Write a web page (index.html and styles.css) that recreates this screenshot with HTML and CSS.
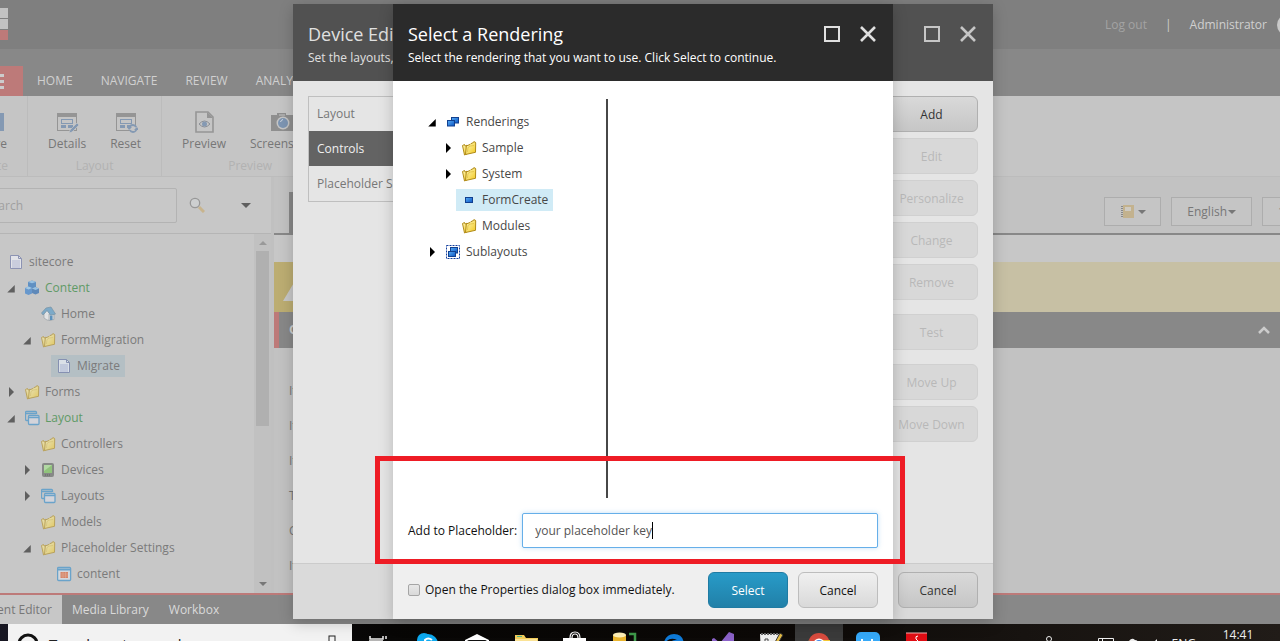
FILE: index.html
```html
<!DOCTYPE html>
<html lang="en">
  <head>
    <meta charset="UTF-8" />
    <meta name="viewport" content="width=device-width, initial-scale=1.0" />
    <title>Content Editor</title>
    <link rel="stylesheet" href="styles.css">
  </head>
  <body>
    <!-- icon set -->
    <svg class="sprite" aria-hidden="true">
      <defs>
        <linearGradient id="gold" x1="0" y1="0" x2="1" y2="1">
          <stop offset="0" stop-color="#fffbc4" />
          <stop offset="1" stop-color="#f2c71c" />
        </linearGradient>
        <linearGradient id="sky" x1="0" y1="0" x2="1" y2="1">
          <stop offset="0" stop-color="#5aaef5" />
          <stop offset="1" stop-color="#0a55c4" />
        </linearGradient>
      </defs>
      <symbol id="i-folder" viewBox="0 0 16 16">
        <path d="M.5 5.500l2-1 .6 1.500 2-.8v8.600l-2.600 1.200z" fill="url(#gold)" stroke="#b08a17" />
        <path d="M3.500 14.500l.8-8.500L8 4.500l1-1 1.500-.3.500-1 2-.4.700 1-.2 9.500z" fill="url(#gold)" stroke="#b08a17" />
        <path d="M5.500 12l.5-4.500 2.500-1.500 3.500-.5" fill="none" stroke="#e6c84e" />
      </symbol>
      <symbol id="i-doc" viewBox="0 0 16 16">
        <path d="M1.500 1.500h8l3 3v10h-11z" fill="#f4f6ff" stroke="#6672a6" />
        <path d="M9.500 1.500v3h3" fill="none" stroke="#6672a6" />
        <path d="M3 7h8M3 9h8M3 11h8M3 13h8" stroke="#a3adda" />
      </symbol>
      <symbol id="i-cubes" viewBox="0 0 16 16">
        <path d="M3 2l4-1.500L11 2v5l-4 1.500L3 7z" fill="#1d6cc0" />
        <path d="M3 2l4 1.300L11 2 7 .5z" fill="#7cc0f5" />
        <path d="M0 8l3.500-1.500L7 8v5.500L3.500 15 0 13.500z" fill="#2a7ad0" />
        <path d="M0 8l3.500 1.400L7 8 3.500 6.500z" fill="#8dcbf8" />
        <path d="M7 8.500L10.500 7 14 8.500V13l-3.500 1.500L7 13z" fill="#1b60b0" />
        <path d="M7 8.500l3.500 1.400L14 8.500 10.500 7z" fill="#7cc0f5" />
      </symbol>
      <symbol id="i-home" viewBox="0 0 16 16">
        <path d="M3 8l3-4 4 5v5.500l-4-.5-3-2z" fill="#f4f6f8" stroke="#7e8a94" stroke-width=".7" />
        <path d="M8 8h5v5.500l-5 1z" fill="#dce4ea" stroke="#7e8a94" stroke-width=".7" />
        <path d="M9 9.500h2.500v4.500H9z" fill="#1770b8" />
        <path d="M.5 7L5 2l5-1 4.500 7-1.500.5L9.500 9 6 4.500 2 9z" fill="#4d97c9" stroke="#45718f" stroke-width=".7" />
      </symbol>
      <symbol id="i-windows" viewBox="0 0 16 16">
        <path d="M11.500 4V2.500q0-1-1-1h-9q-1 0-1 1v7q0 1 1 1H3" fill="none" stroke="#2e8ccc" stroke-width="1.300" />
        <path d="M1 3.500h10" stroke="#2e8ccc" stroke-width="1.500" />
        <rect x="3.500" y="5.500" width="10.500" height="9" rx="1" fill="#dcdde8" stroke="#2e8ccc" stroke-width="1.300" />
        <path d="M4 7.500h10" stroke="#2e8ccc" stroke-width="1.500" />
      </symbol>
      <symbol id="i-device" viewBox="0 0 16 16">
        <rect x="1" y="1" width="12" height="14" rx="2" fill="#5b5f5b" />
        <rect x="3" y="3" width="8" height="8" fill="#6cc24a" />
        <path d="M3 3h8l-8 6z" fill="#a5e58c" />
        <path d="M4 13h6" stroke="#222" stroke-dasharray="1 1" />
      </symbol>
      <symbol id="i-slot" viewBox="0 0 16 16">
        <rect x=".6" y="1.500" width="13" height="13" rx="1" fill="#dfe4ea" stroke="#2e8ccc" stroke-width="1.300" />
        <path d="M1 3.500h12" stroke="#2e8ccc" stroke-width="2" />
        <rect x="3.500" y="6" width="7.500" height="6" fill="#e0592a" />
        <path d="M6 6v6M8.500 6v6M3.500 8H11M3.500 10H11" stroke="#f1a583" stroke-width=".5" />
      </symbol>
      <symbol id="i-renderings" viewBox="0 0 16 16">
        <rect x="5.500" y="3.500" width="7" height="5.500" fill="url(#sky)" stroke="#12408f" />
        <rect x="1.500" y="6.500" width="7" height="5.500" fill="url(#sky)" stroke="#12408f" />
      </symbol>
      <symbol id="i-rendering" viewBox="0 0 16 16">
        <rect x="3.500" y="5.500" width="7" height="5" fill="url(#sky)" stroke="#12408f" />
      </symbol>
      <symbol id="i-sublayouts" viewBox="0 0 16 16">
        <rect x=".5" y="1.500" width="13" height="13" fill="none" stroke="#123f9e" stroke-dasharray="2 1" />
        <rect x="4.500" y="3.500" width="7" height="5.500" fill="url(#sky)" stroke="#12408f" />
        <rect x="2.500" y="7.500" width="7" height="5" fill="url(#sky)" stroke="#12408f" />
      </symbol>
      <symbol id="i-open" viewBox="0 0 8 8"><path d="M7 1.500v6H1z" /></symbol>
      <symbol id="i-closed" viewBox="0 0 8 10"><path d="M2 0l5 5-5 5z" /></symbol>
      <symbol id="i-max" viewBox="0 0 16 16"><rect x="1" y="1" width="14" height="14" fill="none" stroke="currentColor" stroke-width="2" /></symbol>
      <symbol id="i-close" viewBox="0 0 16 16"><path d="M1 1l14 14M15 1L1 15" stroke="currentColor" stroke-width="2.600" /></symbol>
      <symbol id="i-layout" viewBox="0 0 24 24">
        <path d="M2 3h20v18H2z" fill="#959595" />
        <path d="M3 7h18v13H3z" fill="#c5c5c5" />
        <rect x="6.500" y="9.500" width="11" height="4" fill="none" stroke="#8499b3" />
        <path d="M6 15h5v3H6zM13 15h5v3h-5z" fill="#8499b3" />
      </symbol>
    </svg>

    <div class="app">
      <header class="topbar">
        <div class="logo"><span></span><span></span><span class="red"></span></div>
        <div class="account">
          <a href="#" class="logout">Log out</a>
          <span class="bar">|</span>
          <span class="user">Administrator</span>
          <span class="avatar"></span>
        </div>
      </header>

      <nav class="tabs">
        <button class="burger" aria-label="Menu"><span></span><span></span><span></span></button>
        <a href="#">HOME</a>
        <a href="#">NAVIGATE</a>
        <a href="#">REVIEW</a>
        <a href="#">ANALYZE</a>
      </nav>

      <section class="ribbon">
        <div class="chunk chunk-write">
          <div class="commands">
            <button>
              <svg width="20" height="24" viewBox="0 0 20 24"><path d="M0 3h20v18H0z" fill="#8499b3" /></svg>
              Save
            </button>
          </div>
          <p>Write</p>
        </div>
        <div class="chunk">
          <div class="commands">
            <button>
              <svg width="24" height="24" viewBox="0 0 24 24">
                <use href="#i-layout" />
                <path d="M14 23l1-3 7-7 2 2-7 7z" fill="#8499b3" stroke="#c5c5c5" stroke-width=".7" />
              </svg>
              Details
            </button>
            <button>
              <svg width="24" height="24" viewBox="0 0 24 24">
                <use href="#i-layout" />
                <circle cx="19" cy="18.500" r="3.500" fill="#c5c5c5" stroke="#8499b3" stroke-width="1.800" stroke-dasharray="9 2" />
                <path d="M13 17h5l-3 3zM25 20h-5l3-3z" fill="#8499b3" />
              </svg>
              Reset
            </button>
          </div>
          <p>Layout</p>
        </div>
        <div class="chunk">
          <div class="commands">
            <button>
              <svg width="24" height="24" viewBox="0 0 24 24">
                <path d="M4 2h12l5 5v15H4z" fill="none" stroke="#959595" stroke-width="1.600" />
                <path d="M15 2v6h6z" fill="#959595" />
                <path d="M7 14q5.500-6 11 0-5.500 6-11 0z" fill="none" stroke="#8b8f96" />
                <circle cx="12.500" cy="14" r="2.500" fill="#8499b3" />
              </svg>
              Preview
            </button>
            <button>
              <svg width="28" height="24" viewBox="0 0 28 24">
                <path d="M1 5h6V3h9v2h10v16H1z" fill="#8f8f8f" />
                <path d="M9 5h6" stroke="#c5c5c5" />
                <circle cx="13" cy="13" r="6.500" fill="#c5c5c5" />
                <circle cx="13" cy="13" r="5" fill="#7d95b2" />
                <path d="M10.500 12q.5-2 2.500-2.500" stroke="#d4dae2" fill="none" />
              </svg>
              Screenshots
            </button>
          </div>
          <p>Preview</p>
        </div>
      </section>

      <div class="workspace">
        <aside class="sidebar">
          <form class="search">
            <input type="search" placeholder="Search" aria-label="Search" />
            <button type="button" aria-label="Find">
              <svg width="16" height="16" viewBox="0 0 16 16">
                <circle cx="6" cy="6" r="4.700" fill="#cdcfd0" stroke="#979797" stroke-width="1.300" />
                <path d="M10 10l5 5" stroke="#c8b48d" stroke-width="3" />
              </svg>
            </button>
            <button type="button" aria-label="Search options">
              <svg width="10" height="5" viewBox="0 0 10 5"><path d="M0 0h10L5 5z" fill="#5f5f5f" /></svg>
            </button>
          </form>
          <div class="tree-pane">
            <ul class="tree">
              <li>
                <span class="item root"><svg><use href="#i-doc" /></svg>sitecore</span>
                <ul>
                  <li>
                    <svg class="toggle"><use href="#i-open" /></svg><span class="item green"><svg><use href="#i-cubes" /></svg>Content</span>
                    <ul>
                      <li><span class="item leaf"><svg><use href="#i-home" /></svg>Home</span></li>
                      <li>
                        <svg class="toggle"><use href="#i-open" /></svg><span class="item"><svg><use href="#i-folder" /></svg>FormMigration</span>
                        <ul>
                          <li><span class="item leaf active"><svg><use href="#i-doc" /></svg>Migrate</span></li>
                        </ul>
                      </li>
                    </ul>
                  </li>
                  <li><svg class="toggle"><use href="#i-closed" /></svg><span class="item"><svg><use href="#i-folder" /></svg>Forms</span></li>
                  <li>
                    <svg class="toggle"><use href="#i-open" /></svg><span class="item green"><svg><use href="#i-windows" /></svg>Layout</span>
                    <ul>
                      <li><span class="item leaf"><svg><use href="#i-folder" /></svg>Controllers</span></li>
                      <li><svg class="toggle"><use href="#i-closed" /></svg><span class="item"><svg><use href="#i-device" /></svg>Devices</span></li>
                      <li><svg class="toggle"><use href="#i-closed" /></svg><span class="item"><svg><use href="#i-windows" /></svg>Layouts</span></li>
                      <li><span class="item leaf"><svg><use href="#i-folder" /></svg>Models</span></li>
                      <li>
                        <svg class="toggle"><use href="#i-open" /></svg><span class="item"><svg><use href="#i-folder" /></svg>Placeholder Settings</span>
                        <ul>
                          <li><span class="item leaf"><svg><use href="#i-slot" /></svg>content</span></li>
                        </ul>
                      </li>
                    </ul>
                  </li>
                </ul>
              </li>
            </ul>
            <div class="scrollbar">
              <svg width="8" height="4" viewBox="0 0 8 4"><path d="M0 4h8L4 0z" fill="#999" /></svg>
              <div class="track"><div class="thumb"></div></div>
              <svg width="8" height="4" viewBox="0 0 8 4"><path d="M0 0h8L4 4z" fill="#777" /></svg>
            </div>
          </div>
        </aside>

        <main class="editor">
          <div class="editor-head">
            <div class="editor-tab"></div>
            <div class="pickers">
              <button aria-label="Notes">
                <svg width="13" height="13" viewBox="0 0 13 13">
                  <path d="M2 0h11v13H2z" fill="#c3b28e" />
                  <path d="M4 2h6v4H4z" fill="#cfcbc2" />
                  <path d="M1 1v12" stroke="#888" stroke-width="2" stroke-dasharray="1 1" />
                </svg>
                <i class="caret"></i>
              </button>
              <button>English<i class="caret"></i></button>
              <button class="cut">1</button>
            </div>
          </div>
          <div class="message">
            <div class="warn">
              <svg width="36" height="30" viewBox="0 0 36 30"><path d="M18 0l18 30H0z" fill="#c7c7c7" /></svg>
            </div>
          </div>
          <div class="section">
            <b>Quick Info</b>
            <svg width="12" height="8" viewBox="0 0 12 8"><path d="M1 7l5-5 5 5" fill="none" stroke="#ccc" stroke-width="2.500" /></svg>
          </div>
          <ul class="fields">
            <li>Item ID:</li>
            <li>Item name:</li>
            <li>Item path:</li>
            <li>Template:</li>
            <li>Created from:</li>
            <li>Item owner:</li>
          </ul>
        </main>
      </div>

      <nav class="apps">
        <a href="#" class="current">Content Editor</a>
        <a href="#">Media Library</a>
        <a href="#">Workbox</a>
      </nav>

      <footer class="taskbar">
        <div class="taskbar-row">
          <div class="cortana">
            <svg width="22" height="22" viewBox="0 0 22 22"><circle cx="11" cy="11" r="9" fill="none" stroke="#111" stroke-width="3" /></svg>
            <span>Type here to search</span>
            <svg width="8" height="18" viewBox="0 0 8 18"><rect x="1" y="1" width="6" height="10" fill="none" stroke="#222" /></svg>
          </div>
          <div class="pinned">
            <span><svg viewBox="0 0 24 24"><path d="M4 4v3h13V4M3 9h14M20 4v3M20 9v8" fill="none" stroke="#eee" stroke-width="1.500" /></svg></span>
            <span><svg viewBox="0 0 24 24"><circle cx="9" cy="8" r="7" fill="#0eaaf0" /><circle cx="13" cy="12" r="10" fill="#0eaaf0" /><path d="M17 8q-4-3-7 0 0 3 4 4 4 1 3 4-4 3-8 0" fill="none" stroke="#fff" stroke-width="2" /></svg></span>
            <span><svg viewBox="0 0 24 24"><path d="M1 8l12-6 12 6v12H1z" fill="#fff" /><path d="M3 8h20l-10 6z" fill="#111" /></svg></span>
            <span><svg viewBox="0 0 24 24"><path d="M2 3h9l2 3h12v15H2z" fill="#f2cd5c" /><path d="M4 4h5v1H4z" fill="#4db68a" /><path d="M2 7h22v3H2z" fill="#fbe396" /></svg></span>
            <span><svg viewBox="0 0 24 24"><path d="M8 6q0-6 5-6t5 6M10 6q0-4 3-4t3 4" fill="none" stroke="#fff" stroke-width="1.200" /><path d="M1 6h23v16H1z" fill="#fff" /></svg></span>
            <span><svg viewBox="0 0 24 24"><path d="M2 3v18h13V3z" fill="#eab52e" /><ellipse cx="8.500" cy="3" rx="6.500" ry="2.500" fill="#fff0b8" /><path d="M18 2h6v7" fill="none" stroke="#3f9a4a" stroke-width="2.500" /></svg></span>
            <span><svg viewBox="0 0 24 24"><path d="M3 14Q5 2 14 2q10 0 10 12H8q3-7 9-6Q8 4 3 14z" fill="#0f7bd8" /></svg></span>
            <span><svg viewBox="0 0 24 24"><path d="M20 0l5 2v20l-5 2-9-10-6 5-2-2V7l2-1 6 5z" fill="#8b62c8" /></svg></span>
            <span><svg viewBox="0 0 24 24"><path d="M2 2h20v20H3z" fill="#eee" /><path d="M3 2h18" stroke="#666" stroke-width="2" stroke-dasharray="2 1" /><path d="M7 7h3v3H7z" fill="none" stroke="#444" /><path d="M22 1l3 2-8 13-3 2 1-4z" fill="#e6bd45" stroke="#333" /></svg></span>
            <span class="running"><svg viewBox="0 0 24 24"><circle cx="12" cy="12" r="11" fill="#d84c3f" /><path d="M2 8l7 12 3 4A12 12 0 0 1 2 8z" fill="#3fa357" /><path d="M12 8h11v8l-5 7z" fill="#f3c734" /><circle cx="12" cy="12" r="5.500" fill="#fff" /><circle cx="12" cy="12" r="4" fill="#4286e8" /></svg></span>
            <span><svg viewBox="0 0 24 24"><rect x="0" y="0" width="24" height="24" rx="5" fill="#36a9f8" /><path d="M6 7v4M16 7v4" stroke="#fff" stroke-width="2" /></svg></span>
            <span><svg viewBox="0 0 24 24"><path d="M1 1h21v22H1z" fill="#e00d14" /><path d="M1 1h21" stroke="#f2b0b0" /><path d="M13 4q-3 0-2 3l4 4" fill="none" stroke="#fff" /></svg></span>
          </div>
          <div class="tray">
            <svg width="14" height="18" viewBox="0 0 14 18"><circle cx="7" cy="4" r="2.500" fill="none" stroke="#eee" /><path d="M2 14q0-6 5-6t5 6" fill="none" stroke="#eee" /></svg>
            <svg width="12" height="18" viewBox="0 0 12 18"><path d="M2 10l4-4 4 4" fill="none" stroke="#ddd" /></svg>
            <svg width="16" height="18" viewBox="0 0 16 18"><path d="M.5 3.500h15v10H.5zM4.500 4v4H0" fill="none" stroke="#eee" /></svg>
            <svg width="16" height="18" viewBox="0 0 16 18"><path d="M2 12V7q2-1 3-1 3-4 6-1 3 0 3 3v4z" fill="#eee" /></svg>
            <svg width="12" height="18" viewBox="0 0 12 18"><path d="M7 4L3 8H0v4h3l4 4z" fill="#eee" /></svg>
            <span>ENG</span>
            <span class="clock">14:41<br>12-02-2018</span>
          </div>
        </div>
      </footer>
    </div>

    <div class="overlay">
      <section class="dialog outer" aria-label="Device Editor">
        <header class="dialog-head">
          <div>
            <h2>Device Editor</h2>
            <p>Set the layouts, controls</p>
          </div>
          <div class="window-buttons">
            <button aria-label="Maximize"><svg><use href="#i-max" /></svg></button>
            <button aria-label="Close"><svg><use href="#i-close" /></svg></button>
          </div>
        </header>
        <div class="device-body">
          <ul class="device-tabs">
            <li>Layout</li>
            <li class="selected">Controls</li>
            <li>Placeholder Settings</li>
          </ul>
          <div class="actions">
            <button class="btn">Add</button>
            <button class="btn" disabled>Edit</button>
            <button class="btn" disabled>Personalize</button>
            <button class="btn" disabled>Change</button>
            <button class="btn" disabled>Remove</button>
            <button class="btn spaced" disabled>Test</button>
            <button class="btn spaced" disabled>Move Up</button>
            <button class="btn" disabled>Move Down</button>
          </div>
        </div>
        <footer class="dialog-foot">
          <button class="btn">Cancel</button>
        </footer>
      </section>

      <section class="dialog inner" aria-label="Select a Rendering">
        <header class="dialog-head">
          <div>
            <h2>Select a Rendering</h2>
            <p>Select the rendering that you want to use. Click Select to continue.</p>
          </div>
          <div class="window-buttons">
            <button aria-label="Maximize"><svg><use href="#i-max" /></svg></button>
            <button aria-label="Close"><svg><use href="#i-close" /></svg></button>
          </div>
        </header>
        <div class="rendering-body">
          <div class="split">
            <ul class="tree">
              <li>
                <svg class="toggle"><use href="#i-open" /></svg><span class="item"><svg><use href="#i-renderings" /></svg>Renderings</span>
                <ul>
                  <li><svg class="toggle"><use href="#i-closed" /></svg><span class="item"><svg><use href="#i-folder" /></svg>Sample</span></li>
                  <li><svg class="toggle"><use href="#i-closed" /></svg><span class="item"><svg><use href="#i-folder" /></svg>System</span></li>
                  <li><span class="item leaf active"><svg><use href="#i-rendering" /></svg>FormCreate</span></li>
                  <li><span class="item leaf"><svg><use href="#i-folder" /></svg>Modules</span></li>
                </ul>
              </li>
              <li><svg class="toggle"><use href="#i-closed" /></svg><span class="item"><svg><use href="#i-sublayouts" /></svg>Sublayouts</span></li>
            </ul>
            <div class="preview"></div>
          </div>
          <div class="placeholder-row">
            <label for="placeholder">Add to Placeholder:</label>
            <div class="field">
              <input id="placeholder" type="text" value="your placeholder key" />
              <span class="cursor"></span>
            </div>
          </div>
        </div>
        <footer class="dialog-foot">
          <input id="props" type="checkbox" />
          <label for="props">Open the Properties dialog box immediately.</label>
          <button class="btn primary">Select</button>
          <button class="btn">Cancel</button>
        </footer>
      </section>

      <div class="highlight"></div>
    </div>
  </body>
</html>
```
FILE: styles.css
```css
* {
  box-sizing: border-box;
  margin: 0;
  padding: 0;
}
body {
  overflow: hidden;
  font-family: "Open Sans", sans-serif;
  font-size: 12px;
  line-height: 18px;
  color: #777;
}
ul {
  list-style: none;
}
a {
  color: inherit;
  text-decoration: none;
}
button,
input {
  font: inherit;
  color: inherit;
}
button {
  border: none;
  background: none;
}
svg {
  display: block;
  flex: none;
}
.sprite {
  position: absolute;
  width: 0;
  height: 0;
}
.app {
  display: flex;
  flex-direction: column;
  height: 100vh;
  overflow: hidden;
}

/* top bar */
.topbar {
  height: 49px;
  flex: none;
  display: flex;
  justify-content: space-between;
  overflow: hidden;
  background: #7f7f7f;
}
.logo {
  width: 8px;
  padding-top: 8px;
  display: flex;
  flex-direction: column;
  gap: 1px;
}
.logo span {
  height: 10px;
  background: #c2c2c2;
}
.logo .red {
  background: #bd7a79;
}
.account {
  display: flex;
  align-items: center;
  gap: 18px;
  color: #d0d0d0;
}
.logout {
  color: #a3a3a3;
}
.user {
  margin-right: -8px;
}
.avatar {
  width: 22px;
  height: 22px;
  margin-right: -19px;
  border-radius: 50%;
  background: #c9c9c9;
}

/* ribbon */
.tabs {
  height: 47px;
  flex: none;
  display: flex;
  align-items: flex-end;
  background: #888;
  color: #d0d0d0;
}
.tabs a {
  padding: 0 14px;
  line-height: 30px;
}
.burger {
  width: 23px;
  height: 30px;
  display: flex;
  flex-direction: column;
  justify-content: center;
  gap: 3px;
  background: #bd7a79;
}
.burger span {
  width: 4px;
  height: 3px;
  background: #ccc;
}
.ribbon {
  height: 81px;
  flex: none;
  display: flex;
  background: #c5c5c5;
  border-bottom: 1px solid #bcbcbc;
}
.chunk {
  padding: 14px 8px 0;
  border-right: 1px solid #bcbcbc;
}
.chunk:last-child {
  border-right: none;
}
.chunk-write {
  width: 28px;
  display: flex;
  flex-direction: column;
  align-items: flex-end;
}
.commands {
  display: flex;
}
.commands button {
  display: flex;
  flex-direction: column;
  align-items: center;
  gap: 1px;
  padding: 0 12px;
}
.chunk p {
  margin-top: 4px;
  text-align: center;
  color: #b2b2b2;
}
.chunk-write p {
  margin-right: 11px;
}

/* workspace */
.workspace {
  flex: 1;
  min-height: 0;
  display: flex;
}
.sidebar {
  width: 274px;
  flex: none;
  display: flex;
  flex-direction: column;
  background: #c7c7c7;
  border-right: 3px solid #c0c0c0;
}
.search {
  height: 57px;
  flex: none;
  display: flex;
  align-items: center;
  border-bottom: 1px solid #b5b5b5;
}
.search input {
  width: 209px;
  height: 35px;
  flex: none;
  margin-left: -32px;
  margin-right: 12px;
  padding-left: 16px;
  background: #c8c8c8;
  border: 1px solid #b3b3b3;
  border-radius: 2px;
}
.search input::placeholder {
  color: #a0a0a0;
}
.search button {
  width: 16px;
  flex: none;
  margin-right: 36px;
}
.tree-pane {
  flex: 1;
  min-height: 0;
  display: flex;
  justify-content: space-between;
}
.tree li > .item {
  margin: 2px 0;
}
.item {
  display: inline-flex;
  align-items: center;
  gap: 4px;
  height: 22px;
  padding: 0 5px 0 6px;
  vertical-align: top;
  white-space: nowrap;
}
.item svg {
  width: 16px;
  height: 16px;
}
.toggle {
  display: inline-block;
  width: 16px;
  height: 10px;
  margin: 8px 0;
  vertical-align: top;
}
.tree li > .leaf {
  margin-left: 16px;
}
.tree li li ul,
.inner .tree ul {
  margin-left: 16px;
}
.sidebar .tree {
  padding: 15px 0 0 3px;
  color: #7b7b7b;
}
.sidebar .item svg {
  opacity: 0.6;
}
.sidebar .toggle {
  fill: #5f5f5f;
}
.sidebar .active {
  background: #b4bfc4;
}
.sidebar .green {
  color: #5f9a66;
}
.scrollbar {
  width: 17px;
  display: flex;
  flex-direction: column;
  align-items: center;
  padding: 7px 0;
  background: #c1c1c1;
}
.track {
  flex: 1;
  padding-top: 6px;
}
.thumb {
  width: 13px;
  height: 53%;
  background: #b0b0b0;
}

/* editor */
.editor {
  flex: 1;
  min-width: 0;
  background: #c2c2c2;
}
.editor-head {
  height: 58px;
  display: flex;
  justify-content: space-between;
  align-items: flex-end;
  border-bottom: 2px solid #888;
}
.editor-tab {
  width: 120px;
  height: 41px;
  margin-left: 15px;
  background: #888;
}
.pickers {
  display: flex;
  gap: 10px;
  padding-bottom: 7px;
}
.pickers button {
  height: 29px;
  display: flex;
  align-items: center;
  gap: 1px;
  padding: 0 15px;
  border: 1px solid #adadad;
  background: #c5c5c5;
}
.pickers button:first-child {
  gap: 4px;
  padding: 0 14px 0 16px;
}
.pickers .cut {
  width: 18px;
  border-right: none;
  padding-right: 0;
  overflow: hidden;
}
.caret {
  border: 4px solid transparent;
  border-top-color: #777;
  border-bottom: none;
}
.message {
  margin-top: 27px;
  height: 50px;
  display: flex;
  background: #c7c0a4;
  box-shadow: 0 -27px #c7c7c7;
}
.warn {
  width: 50px;
  padding: 9px;
  background: #bcad72;
}
.section {
  height: 36px;
  display: flex;
  align-items: center;
  justify-content: space-between;
  padding: 0 10px;
  background: #888;
  border-left: 5px solid #bd7a79;
  color: #ccc;
}
.fields {
  padding: 34px 15px 0;
}
.fields li {
  height: 35px;
}

/* application tabs */
.apps {
  height: 31px;
  flex: none;
  display: flex;
  background: #888;
  border-top: 2px solid #bd7a79;
  color: #dadada;
}
.apps a {
  padding: 0 10px;
  line-height: 29px;
}
.apps .current {
  width: 62px;
  display: flex;
  justify-content: flex-end;
  background: #c7c7c7;
  color: #777;
  white-space: nowrap;
}

/* taskbar */
.taskbar {
  height: 17px;
  flex: none;
  overflow: hidden;
  background: linear-gradient(90deg, #171622, #080706 30%, #0d0a08 60%, #211c18);
}
.taskbar-row {
  height: 40px;
  display: flex;
}
.cortana {
  width: 344px;
  margin-left: 8px;
  display: flex;
  align-items: center;
  gap: 10px;
  padding: 0 16px 0 9px;
  background: #f2f2f2;
  color: #222;
  font-size: 15px;
}
.cortana span {
  flex: 1;
}
.pinned {
  display: flex;
  gap: 1px;
  padding-left: 2px;
}
.pinned span {
  width: 48px;
  display: flex;
  align-items: center;
  justify-content: center;
}
.pinned svg {
  width: 24px;
  height: 24px;
  overflow: visible;
}
.pinned .running {
  background: #3b3b3b;
}
.tray {
  flex: 1;
  display: flex;
  align-items: center;
  justify-content: flex-end;
  gap: 10px;
  padding-right: 10px;
  color: #eee;
}
.tray svg:first-child {
  margin-right: 10px;
}
.clock {
  width: 64px;
  text-align: center;
}

/* dialogs */
.overlay {
  position: absolute;
  top: 4px;
  left: calc(50% - 347px);
  width: 700px;
  height: calc(100vh - 26px);
}
.dialog {
  position: absolute;
  top: 0;
  bottom: 0;
  display: flex;
  flex-direction: column;
  box-shadow: 0 4px 14px rgba(0, 0, 0, 0.2);
}
.outer {
  left: 0;
  right: 0;
  background: #e5e5e5;
}
.inner {
  left: 100px;
  right: 100px;
  background: #fff;
  color: #111;
}
.dialog-head {
  height: 77px;
  flex: none;
  display: flex;
  justify-content: space-between;
  padding: 17px 17px 0 15px;
  background: #2b2b2b;
  color: #fff;
  white-space: nowrap;
}
.outer .dialog-head {
  background: #515151;
  color: #e0e0e0;
}
.dialog-head h2 {
  margin-bottom: 2px;
  font-size: 18px;
  font-weight: 400;
  line-height: 26px;
}
.window-buttons {
  display: flex;
  align-items: flex-start;
  gap: 20px;
  padding-top: 5px;
  color: #e0e0e0;
}
.outer .window-buttons {
  color: #c6c6c6;
}
.window-buttons svg {
  width: 16px;
  height: 16px;
}
.device-body {
  flex: 1;
  display: flex;
  justify-content: space-between;
  padding: 15px;
}
.device-tabs {
  width: 150px;
  align-self: flex-start;
  border: 1px solid #bfbfbf;
}
.device-tabs li {
  padding: 0 8px;
  line-height: 35px;
}
.device-tabs li:first-child {
  line-height: 34px;
}
.device-tabs .selected {
  background: #636363;
  color: #f0f0f0;
}
.actions {
  width: 93px;
  display: flex;
  flex-direction: column;
  gap: 6px;
}
.btn {
  height: 36px;
  min-width: 80px;
  padding-top: 2px;
  border: 1px solid #bdbdbd;
  border-radius: 6px;
  background: linear-gradient(#f0f0f0, #d9d9d9);
  color: #111;
}
.outer .btn {
  border-color: #b0b0b0;
  background: linear-gradient(#d9d9d9, #c6c6c6);
  color: #333;
}
.outer .btn:disabled {
  border-color: #d0d0d0;
  background: #d8d8d8;
  color: #b8b8b8;
}
.spaced {
  margin-top: 8px;
}
.inner .primary {
  margin-left: auto;
  border-color: #1f7ba3;
  background: linear-gradient(#289bc8, #2180a8);
  color: #fff;
}
.dialog-foot {
  height: 56px;
  flex: none;
  display: flex;
  align-items: center;
  justify-content: flex-end;
  gap: 10px;
  padding: 0 15px 2px;
  background: #efefef;
}
.outer .dialog-foot {
  padding-bottom: 3px;
  background: #dadada;
  border-top: 1px solid #cbcbcb;
}
.dialog-foot input {
  appearance: none;
  width: 12px;
  height: 12px;
  margin-right: -5px;
  border: 1px solid #a5a5a5;
  border-radius: 2px;
  background: linear-gradient(#e8e8e8, #d9d9d9);
}
.rendering-body {
  flex: 1;
  display: flex;
  flex-direction: column;
  gap: 15px;
  padding: 18px 15px 15px;
}
.split {
  flex: 1;
  display: flex;
}
.inner .tree {
  width: 198px;
  padding: 10px 0 0 16px;
  color: #474747;
}
.inner .toggle {
  fill: #000;
}
.inner .active {
  background: #d0ebf6;
}
.preview {
  flex: 1;
  border-left: 2px solid #474747;
}
.placeholder-row {
  display: flex;
  align-items: center;
  gap: 5px;
}
.field {
  flex: 1;
  position: relative;
}
.field input {
  display: block;
  width: 100%;
  height: 35px;
  padding: 0 12px;
  border: 1px solid #66afe9;
  border-radius: 2px;
  box-shadow: 0 0 5px rgba(102, 175, 233, 0.4);
  color: #555;
}
.cursor {
  position: absolute;
  top: 9px;
  left: 130px;
  width: 1px;
  height: 17px;
  background: #000;
}
.highlight {
  position: absolute;
  left: 82px;
  right: 88px;
  bottom: 55px;
  height: 108px;
  border: 5px solid #ee1c25;
}
```
